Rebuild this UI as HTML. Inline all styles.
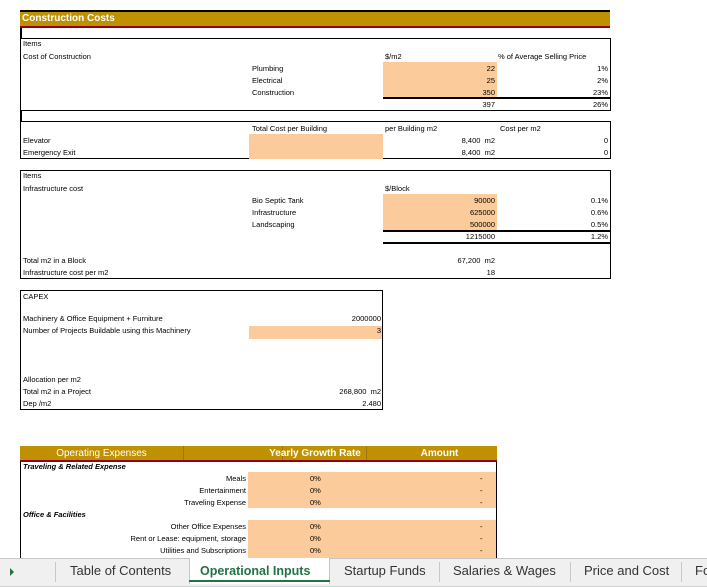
<!DOCTYPE html>
<html><head><meta charset="utf-8"><style>
body{margin:0;width:707px;height:587px;background:#fff;position:relative;overflow:hidden;font-family:"Liberation Sans",sans-serif;font-size:7.5px;color:#000}
div{position:absolute;box-sizing:border-box}
.t{white-space:nowrap;line-height:10px}
.r{text-align:right}
.p{background:#FBCB9B}
.box{border:1px solid #000}
.tab{top:559px;height:26px;line-height:24px;font-size:13px;color:#333;white-space:nowrap}
.sep{top:562px;width:1px;height:20px;background:#c8c8c8}
</style></head><body>
<!-- header -->
<div style="left:20px;top:10px;width:590px;height:2px;background:#000"></div>
<div style="left:20px;top:12px;width:590px;height:14px;background:#BF9000"></div>
<div class="t" style="left:22px;top:13px;color:#fff;font-size:10px;font-weight:bold;line-height:12px">Construction Costs</div>
<div style="left:20px;top:26px;width:590px;height:2px;background:#9B0000"></div>
<div style="left:20px;top:28px;width:590px;height:10px;border-left:2px solid #000"></div>
<!-- box1 -->
<div class="box" style="left:20px;top:38px;width:591px;height:73px"></div>
<div class="t" style="left:23px;top:39px">Items</div>
<div class="t" style="left:23px;top:52px">Cost of Construction</div>
<div class="t" style="left:385px;top:52px">$/m2</div>
<div class="t" style="left:498px;top:52px">% of Average Selling Price</div>
<div class="p" style="left:383px;top:62px;width:114px;height:35px"></div>
<div class="t" style="left:252px;top:64px">Plumbing</div>
<div class="t" style="left:252px;top:76px">Electrical</div>
<div class="t" style="left:252px;top:88px">Construction</div>
<div class="t r" style="left:400px;top:64px;width:95px">22</div>
<div class="t r" style="left:400px;top:76px;width:95px">25</div>
<div class="t r" style="left:400px;top:88px;width:95px">350</div>
<div class="t r" style="left:500px;top:64px;width:108px">1%</div>
<div class="t r" style="left:500px;top:76px;width:108px">2%</div>
<div class="t r" style="left:500px;top:88px;width:108px">23%</div>
<div style="left:383px;top:97px;width:227px;height:2px;background:#000"></div>
<div class="t r" style="left:400px;top:100px;width:95px">397</div>
<div class="t r" style="left:500px;top:100px;width:108px">26%</div>
<div style="left:20px;top:111px;width:590px;height:11px;border-left:2px solid #000"></div>
<!-- box2 -->
<div class="box" style="left:20px;top:121px;width:591px;height:38px"></div>
<div class="p" style="left:249px;top:134px;width:134px;height:25px"></div>
<div class="t" style="left:252px;top:124px">Total Cost per Building</div>
<div class="t" style="left:385px;top:124px">per Building m2</div>
<div class="t" style="left:500px;top:124px">Cost per m2</div>
<div class="t" style="left:23px;top:136px">Elevator</div>
<div class="t" style="left:23px;top:148px">Emergency Exit</div>
<div class="t r" style="left:400px;top:136px;width:95px">8,400&nbsp; m2</div>
<div class="t r" style="left:400px;top:148px;width:95px">8,400&nbsp; m2</div>
<div class="t r" style="left:500px;top:136px;width:108px">0</div>
<div class="t r" style="left:500px;top:148px;width:108px">0</div>
<!-- box3 -->
<div class="box" style="left:20px;top:170px;width:591px;height:109px"></div>
<div class="t" style="left:23px;top:171px">Items</div>
<div class="t" style="left:23px;top:184px">Infrastructure cost</div>
<div class="t" style="left:385px;top:184px">$/Block</div>
<div class="p" style="left:383px;top:194px;width:114px;height:36px"></div>
<div class="t" style="left:252px;top:196px">Bio Septic Tank</div>
<div class="t" style="left:252px;top:208px">Infrastructure</div>
<div class="t" style="left:252px;top:220px">Landscaping</div>
<div class="t r" style="left:400px;top:196px;width:95px">90000</div>
<div class="t r" style="left:400px;top:208px;width:95px">625000</div>
<div class="t r" style="left:400px;top:220px;width:95px">500000</div>
<div class="t r" style="left:500px;top:196px;width:108px">0.1%</div>
<div class="t r" style="left:500px;top:208px;width:108px">0.6%</div>
<div class="t r" style="left:500px;top:220px;width:108px">0.5%</div>
<div style="left:383px;top:230px;width:227px;height:2px;background:#000"></div>
<div class="t r" style="left:400px;top:232px;width:95px">1215000</div>
<div class="t r" style="left:500px;top:232px;width:108px">1.2%</div>
<div style="left:383px;top:242px;width:227px;height:2px;background:#000"></div>
<div class="t" style="left:23px;top:256px">Total m2 in a Block</div>
<div class="t" style="left:23px;top:268px">Infrastructure cost per m2</div>
<div class="t r" style="left:400px;top:256px;width:95px">67,200&nbsp; m2</div>
<div class="t r" style="left:400px;top:268px;width:95px">18</div>
<!-- capex -->
<div class="box" style="left:20px;top:290px;width:363px;height:120px"></div>
<div class="t" style="left:23px;top:292px">CAPEX</div>
<div class="t" style="left:23px;top:314px">Machinery &amp; Office Equipment + Furniture</div>
<div class="t r" style="left:280px;top:314px;width:101px">2000000</div>
<div class="p" style="left:249px;top:326px;width:133px;height:13px"></div>
<div class="t" style="left:23px;top:326px">Number of Projects Buildable using this Machinery</div>
<div class="t r" style="left:280px;top:326px;width:101px">3</div>
<div class="t" style="left:23px;top:375px">Allocation per m2</div>
<div class="t" style="left:23px;top:387px">Total m2 in a Project</div>
<div class="t r" style="left:280px;top:387px;width:101px">268,800&nbsp; m2</div>
<div class="t" style="left:23px;top:399px">Dep /m2</div>
<div class="t r" style="left:280px;top:399px;width:101px">2.480</div>
<!-- opex -->
<div style="left:20px;top:446px;width:477px;height:14px;background:#BF9000"></div>
<div style="left:183px;top:446px;width:1px;height:14px;background:#a07800"></div>
<div style="left:282px;top:446px;width:1px;height:14px;background:#a07800"></div>
<div style="left:366px;top:446px;width:1px;height:14px;background:#a07800"></div>
<div class="t" style="left:20px;top:447px;width:163px;text-align:center;color:#fff;font-size:10px;line-height:13px">Operating Expenses</div>
<div class="t" style="left:248px;top:447px;width:134px;text-align:center;color:#fff;font-size:10px;line-height:13px;font-weight:bold">Yearly Growth Rate</div>
<div class="t" style="left:382px;top:447px;width:115px;text-align:center;color:#fff;font-size:10px;line-height:13px;font-weight:bold">Amount</div>
<div style="left:20px;top:460px;width:477px;height:2px;background:#9B0000"></div>
<div style="left:20px;top:462px;width:477px;height:96px;border-left:1px solid #000;border-right:1px solid #000"></div>
<div class="t" style="left:23px;top:462px;font-weight:bold;font-style:italic">Traveling &amp; Related Expense</div>
<div class="p" style="left:248px;top:472px;width:248px;height:36px"></div>
<div class="t r" style="left:60px;top:474px;width:186px">Meals</div>
<div class="t r" style="left:60px;top:486px;width:186px">Entertainment</div>
<div class="t r" style="left:60px;top:498px;width:186px">Traveling Expense</div>
<div class="t" style="left:23px;top:510px;font-weight:bold;font-style:italic">Office &amp; Facilities</div>
<div class="p" style="left:248px;top:520px;width:248px;height:38px"></div>
<div class="t r" style="left:60px;top:522px;width:186px">Other Office Expenses</div>
<div class="t r" style="left:60px;top:534px;width:186px">Rent or Lease: equipment, storage</div>
<div class="t r" style="left:60px;top:546px;width:186px">Utilities and Subscriptions</div>
<div class="t" style="left:310px;top:474px">0%</div><div class="t" style="left:480px;top:474px">-</div>
<div class="t" style="left:310px;top:486px">0%</div><div class="t" style="left:480px;top:486px">-</div>
<div class="t" style="left:310px;top:498px">0%</div><div class="t" style="left:480px;top:498px">-</div>
<div class="t" style="left:310px;top:522px">0%</div><div class="t" style="left:480px;top:522px">-</div>
<div class="t" style="left:310px;top:534px">0%</div><div class="t" style="left:480px;top:534px">-</div>
<div class="t" style="left:310px;top:546px">0%</div><div class="t" style="left:480px;top:546px">-</div>
<!-- tabs -->
<div style="left:0;top:558px;width:707px;height:29px;background:#f0f0f0;border-top:1px solid #c6c6c6;border-bottom:1px solid #d0d0d0"></div>
<div style="left:10px;top:568px;width:0;height:0;border-top:4px solid transparent;border-bottom:4px solid transparent;border-left:4px solid #217346"></div>
<div class="sep" style="left:55px"></div>
<div class="tab" style="left:70px">Table of Contents</div>
<div style="left:189px;top:558px;width:141px;height:26px;background:#fff;border-left:1px solid #c6c6c6;border-right:1px solid #c6c6c6"></div>
<div class="tab" style="left:200px;color:#217346;font-weight:bold;font-size:12.5px">Operational Inputs</div>
<div style="left:189px;top:580px;width:141px;height:2px;background:#217346"></div>
<div class="tab" style="left:344px">Startup Funds</div>
<div class="sep" style="left:439px"></div>
<div class="tab" style="left:453px">Salaries &amp; Wages</div>
<div class="sep" style="left:570px"></div>
<div class="tab" style="left:584px">Price and Cost</div>
<div class="sep" style="left:681px"></div>
<div class="tab" style="left:695px">Fo</div>
</body></html>
